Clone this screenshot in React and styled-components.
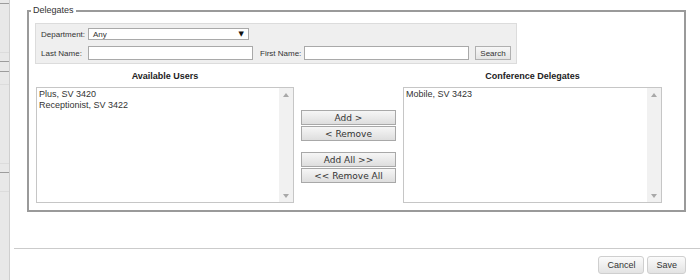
import styled, { createGlobalStyle } from "styled-components";

const GlobalStyle = createGlobalStyle`
  html, body {
    margin: 0;
    padding: 0;
    background: #fff;
    font-family: "Liberation Sans", Arial, sans-serif;
  }
`;

const sideRows = [
  { h: 3, tone: "dark" },
  { h: 48, tone: "light" },
  { h: 8, tone: "dark" },
  { h: 9, tone: "dark" },
  { h: 12, tone: "light" },
  { h: 78, tone: "light" },
  { h: 8, tone: "dark" },
  { h: 18, tone: "light" },
];

const available = ["Plus, SV 3420", "Receptionist, SV 3422"];
const delegates = ["Mobile, SV 3423"];

const ScrollArrow = ({ down }) => (
  <svg width="6" height="4" viewBox="0 0 6 4">
    <path d={down ? "M0 0 L6 0 L3 4 Z" : "M0 4 L6 4 L3 0 Z"} fill="#a8a8a8" />
  </svg>
);

const UserList = ({ items }) => (
  <ListBox>
    <ListItems>
      {items.map((item) => (
        <ListItem key={item}>{item}</ListItem>
      ))}
    </ListItems>
    <ScrollTrack>
      <ScrollArrow />
      <ScrollArrow down />
    </ScrollTrack>
  </ListBox>
);

export default function App() {
  return (
    <>
      <GlobalStyle />
      <Page>
        <Sidebar>
          {sideRows.map((row, i) => (
            <SideRow key={i} $h={row.h} $tone={row.tone} />
          ))}
        </Sidebar>
        <Main>
          <Fieldset>
            <Legend>Delegates</Legend>
            <SearchPanel>
              <FormRow>
                <Label $w={47}>Department:</Label>
                <SelectBox>
                  <span>Any</span>
                  <SelectArrow>▼</SelectArrow>
                </SelectBox>
              </FormRow>
              <FormRow>
                <Label $w={47}>Last Name:</Label>
                <TextInput type="text" />
                <Label $w={44} $ml={7}>First Name:</Label>
                <TextInput type="text" />
                <SearchButton>Search</SearchButton>
              </FormRow>
            </SearchPanel>
            <Transfer>
              <ColumnTitle>Available Users</ColumnTitle>
              <span />
              <ColumnTitle>Conference Delegates</ColumnTitle>
              <UserList items={available} />
              <ButtonColumn>
                <ButtonGroup>
                  <MoveButton>Add &gt;</MoveButton>
                  <MoveButton>&lt; Remove</MoveButton>
                </ButtonGroup>
                <ButtonGroup>
                  <MoveButton>Add All &gt;&gt;</MoveButton>
                  <MoveButton>&lt;&lt; Remove All</MoveButton>
                </ButtonGroup>
              </ButtonColumn>
              <UserList items={delegates} />
            </Transfer>
          </Fieldset>
          <Footer>
            <FooterButton>Cancel</FooterButton>
            <FooterButton>Save</FooterButton>
          </Footer>
        </Main>
      </Page>
    </>
  );
}

const Page = styled.div`
  display: flex;
  height: 280px;
  overflow: hidden;
`;

const Sidebar = styled.div`
  width: 9px;
  flex-shrink: 0;
  background: #e8e8e8;
  border-right: 1px solid #cfcfcf;
  display: flex;
  flex-direction: column;
`;

const SideRow = styled.div`
  height: ${(p) => p.$h}px;
  border-bottom: 1px solid ${(p) => (p.$tone === "dark" ? "#9c9c9c" : "#dcdcdc")};
`;

const Main = styled.div`
  flex: 1;
  display: flex;
  flex-direction: column;
`;

const Fieldset = styled.fieldset`
  margin: 5px 14px 0 17px;
  padding: 0 6px 7px 6px;
  border: 2px solid #9a9a9a;
  min-width: 0;
`;

const Legend = styled.legend`
  margin-left: -4px;
  padding: 0 2px;
  font-size: 9px;
  line-height: 11px;
  color: #333;
`;

const SearchPanel = styled.div`
  margin-top: 7px;
  width: 482px;
  box-sizing: border-box;
  background: #efefef;
  border: 1px solid #dcdcdc;
  padding: 4px 5px 3px 5px;
  display: flex;
  flex-direction: column;
  gap: 6px;
`;

const FormRow = styled.div`
  display: flex;
  align-items: center;
`;

const Label = styled.span`
  width: ${(p) => p.$w}px;
  margin-left: ${(p) => p.$ml || 0}px;
  flex-shrink: 0;
  font-size: 8px;
  color: #333;
  white-space: nowrap;
`;

const SelectBox = styled.div`
  width: 161px;
  height: 12px;
  box-sizing: border-box;
  background: #fff;
  border: 1px solid #a9a9a9;
  display: flex;
  align-items: center;
  justify-content: space-between;
  padding: 0 4px 0 4px;
  font-size: 8px;
  color: #333;
`;

const SelectArrow = styled.span`
  font-size: 7px;
  color: #111;
  font-family: "DejaVu Sans", sans-serif;
`;

const TextInput = styled.input`
  width: 165px;
  height: 14px;
  box-sizing: border-box;
  margin: 0;
  padding: 0 3px;
  border: 1px solid #a9a9a9;
  background: #fff;
  outline: none;
`;

const SearchButton = styled.button`
  margin-left: 6px;
  width: 39px;
  height: 14px;
  padding: 0;
  box-sizing: border-box;
  border: 1px solid #b0b0b0;
  background: linear-gradient(#f7f7f7, #e4e4e4);
  font-family: "Liberation Sans", Arial, sans-serif;
  font-size: 8px;
  color: #333;
`;

const Transfer = styled.div`
  margin-left: 1px;
  display: grid;
  grid-template-columns: 258px 95px 259px;
  grid-template-rows: 23px 116px;
  column-gap: 7px;
`;

const ColumnTitle = styled.div`
  display: flex;
  align-items: center;
  justify-content: center;
  font-size: 9px;
  font-weight: bold;
  color: #222;
`;

const ListBox = styled.div`
  display: flex;
  box-sizing: border-box;
  border: 1px solid #c6c6c6;
  background: #fff;
`;

const ListItems = styled.div`
  flex: 1;
  padding: 1px 2px;
`;

const ListItem = styled.div`
  font-size: 9px;
  line-height: 11px;
  color: #333;
`;

const ScrollTrack = styled.div`
  width: 14px;
  background: #f1f1f1;
  display: flex;
  flex-direction: column;
  align-items: center;
  justify-content: space-between;
  padding: 5px 0 4px;
`;

const ButtonColumn = styled.div`
  padding-top: 23px;
  display: flex;
  flex-direction: column;
  gap: 11px;
`;

const ButtonGroup = styled.div`
  display: flex;
  flex-direction: column;
  gap: 1px;
`;

const MoveButton = styled.button`
  height: 15px;
  padding: 0;
  border: 1px solid #a8a8a8;
  background: linear-gradient(#f6f6f6, #dedede);
  font-family: "DejaVu Sans", Verdana, sans-serif;
  font-size: 9px;
  color: #333;
`;

const Footer = styled.div`
  margin: 36px 0 0 4px;
  border-top: 1px solid #cbcbcb;
  padding: 7px 14px 0 0;
  display: flex;
  justify-content: flex-end;
  gap: 3px;
`;

const FooterButton = styled.button`
  height: 18px;
  padding: 0 8px;
  border: 1px solid #cfcfcf;
  border-radius: 3px;
  background: linear-gradient(#fbfbfb, #e3e3e3);
  font-family: "Liberation Sans", Arial, sans-serif;
  font-size: 9px;
  color: #333;
`;
